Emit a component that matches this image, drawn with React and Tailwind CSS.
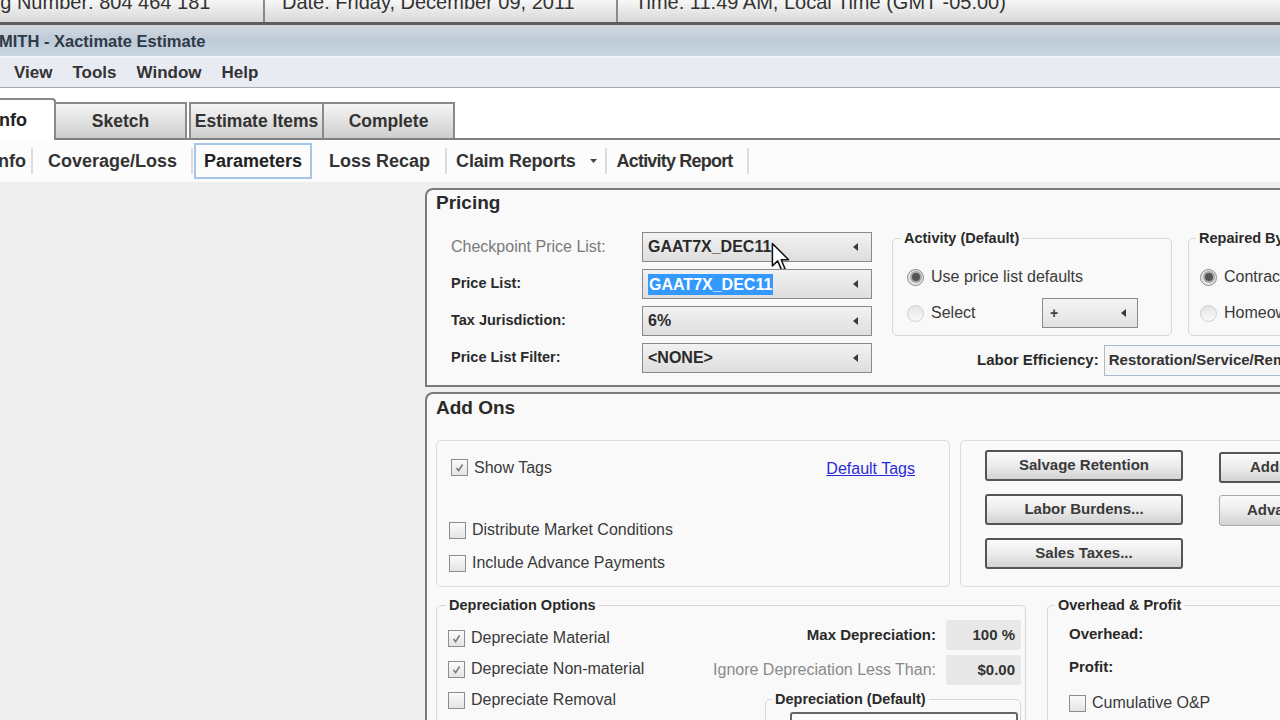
import React from 'react';

const Arrow = () => (
    <svg width="7" height="10" viewBox="0 0 7 10" className="shrink-0">
        <polygon points="6,1 6,9 1,5" fill="#3a3a3a" />
    </svg>
);

const Combo = ({ children, className = '', highlight = false }) => (
    <div className={`relative flex items-center justify-between h-[30px] border border-[#8a8a8a] bg-linear-to-b from-[#f2f2f2] to-[#dedede] pl-[5px] pr-[12px] ${className}`}>
        {highlight ? (
            <span className="bg-[#3399ff] text-white text-[16px] font-bold leading-[21px] px-[1px]">{children}</span>
        ) : (
            <span className="text-[16px] font-bold text-[#2a2a2a] whitespace-nowrap">{children}</span>
        )}
        <Arrow />
    </div>
);

const Radio = ({ checked }) =>
    checked ? (
        <span className="w-[17px] h-[17px] shrink-0 rounded-full border border-[#8a8a8a] bg-[#e6e6e6] flex items-center justify-center">
            <span className="w-[8px] h-[8px] rounded-full bg-[#555] ring-2 ring-[#a8a8a8]" />
        </span>
    ) : (
        <span className="w-[17px] h-[17px] shrink-0 rounded-full border border-[#cfcfcf] bg-linear-to-b from-[#e4e4e4] to-[#fafafa]" />
    );

const Check = ({ checked }) => (
    <span className="w-[17px] h-[17px] shrink-0 border border-[#8d8d8d] bg-linear-to-b from-[#fbfbfb] to-[#e4e4e4] flex items-center justify-center">
        {checked && (
            <svg width="11" height="11" viewBox="0 0 11 11">
                <path d="M2.5 6 L4.6 8.6 L8.6 2.5" stroke="#7a7a7a" strokeWidth="1.6" fill="none" />
            </svg>
        )}
    </span>
);

const CheckRow = ({ checked, children, className = '' }) => (
    <div className={`flex items-center h-[24px] ${className}`}>
        <Check checked={checked} />
        <span className="ml-[6px] text-[16px] text-[#3a3a3a] whitespace-nowrap">{children}</span>
    </div>
);

const Btn = ({ children, light = false, className = '' }) => (
    <div
        className={`h-[31px] shrink-0 rounded-[3px] flex items-center justify-center bg-linear-to-b from-[#fbfbfb] via-[#ececec] to-[#d2d2d2] text-[15px] font-bold text-[#3a3a3a] whitespace-nowrap ${light ? 'border border-[#a9a9a9]' : 'border-2 border-[#555]'} ${className}`}
    >
        {children}
    </div>
);

const Group = ({ title, className = '', legendClass = 'ml-[8px]', children }) => (
    <fieldset className={`border border-[#d7d7d7] rounded-[5px] shrink-0 ${className}`}>
        <legend className={`px-[3px] text-[14.5px] font-bold leading-[18px] text-[#2a2a2a] whitespace-nowrap ${legendClass}`}>{title}</legend>
        {children}
    </fieldset>
);

const Sep = () => <div className="w-[2px] h-[26px] bg-[#dcdcdc] shrink-0" />;

export default function App() {
    return (
        <div className="w-[1280px] h-[720px] overflow-hidden bg-[#efefef] flex flex-col font-['Liberation_Sans',Arial,sans-serif] text-[#333]">
            {/* status strip */}
            <div className="h-[25px] shrink-0 flex bg-linear-to-b from-[#f7f7f7] to-[#d8d8d8] border-b-[3px] border-[#5c5c5c] overflow-hidden">
                <div className="w-[265px] shrink-0 border-r-2 border-[#8a8a8a] overflow-hidden">
                    <div className="-mt-[8px] -ml-[22px] text-[20px] leading-[20px] whitespace-nowrap">Log Number: 804 464 181</div>
                </div>
                <div className="w-[353px] shrink-0 border-r-2 border-[#8a8a8a] overflow-hidden pl-[17px]">
                    <div className="-mt-[8px] text-[20px] leading-[20px] whitespace-nowrap">Date: Friday, December 09, 2011</div>
                </div>
                <div className="flex-1 overflow-hidden pl-[17px]">
                    <div className="-mt-[8px] text-[20px] leading-[20px] whitespace-nowrap">Time: 11:49 AM, Local Time (GMT -05:00)</div>
                </div>
            </div>

            {/* window title */}
            <div className="h-[33px] shrink-0 pt-[2px] bg-linear-to-b from-[#d5d9de] via-[#bdcad8] to-[#cbd7e2] border-b-2 border-[#eef8fa] overflow-hidden">
                <div className="-ml-[12px] text-[16.5px] font-bold leading-[29px] text-[#2f3a46] whitespace-nowrap">SMITH - Xactimate Estimate</div>
            </div>

            {/* menu */}
            <div className="h-[30px] shrink-0 flex gap-[20px] pl-[14px] bg-[#e9ebf2] border-b border-[#a9a9a9] text-[17px] font-bold leading-[29px] text-[#333]">
                <span>View</span>
                <span>Tools</span>
                <span>Window</span>
                <span>Help</span>
            </div>

            {/* main tabs */}
            <div className="h-[52px] shrink-0 flex items-end bg-white border-b-2 border-[#808080]">
                <div className="relative w-[56px] h-[42px] -mb-[2px] bg-white border-t-2 border-r-2 border-[#8a8a8a] rounded-tr-[4px] flex items-center shrink-0">
                    <span className="-ml-[6px] text-[18px] font-bold text-[#222]">Info</span>
                </div>
                <div className="w-[131px] h-[36px] border-t-2 border-r-2 border-[#8a8a8a] bg-linear-to-b from-[#f6f6f6] to-[#cdcdcd] flex items-center justify-center text-[17.5px] font-bold text-[#333] shrink-0">
                    Sketch
                </div>
                <div className="w-[135px] h-[36px] ml-[2px] border-t-2 border-x-2 border-[#8a8a8a] bg-linear-to-b from-[#f6f6f6] to-[#cdcdcd] flex items-center justify-center text-[17.5px] font-bold text-[#333] whitespace-nowrap shrink-0">
                    Estimate Items
                </div>
                <div className="w-[131px] h-[36px] border-t-2 border-r-2 border-[#8a8a8a] bg-linear-to-b from-[#f6f6f6] to-[#cdcdcd] flex items-center justify-center text-[17.5px] font-bold text-[#333] shrink-0">
                    Complete
                </div>
            </div>

            {/* sub tabs */}
            <div className="h-[42px] shrink-0 flex items-center bg-[#fcfcfc] text-[18px] font-bold text-[#333] whitespace-nowrap">
                <span className="-ml-[7px]">Info</span>
                <div className="ml-[5px]"><Sep /></div>
                <span className="ml-[15px]">Coverage/Loss</span>
                <div className="ml-[14px]"><Sep /></div>
                <div className="ml-[1px] w-[118px] h-[36px] border-2 border-[#a4c6e8] flex items-center justify-center text-[#222]">Parameters</div>
                <span className="ml-[17px]">Loss Recap</span>
                <div className="ml-[15px]"><Sep /></div>
                <span className="ml-[9px] tracking-[-0.2px]">Claim Reports</span>
                <svg width="9" height="6" viewBox="0 0 9 6" className="ml-[13px]">
                    <polygon points="1,1 8,1 4.5,5" fill="#444" />
                </svg>
                <div className="ml-[7px]"><Sep /></div>
                <span className="ml-[10px] tracking-[-0.8px]">Activity Report</span>
                <div className="ml-[14px]"><Sep /></div>
            </div>

            {/* content */}
            <div className="flex-1 flex min-h-0">
                <div className="w-[425px] shrink-0" />
                <div className="w-[900px] shrink-0 pt-[6px] flex flex-col gap-[5px]">
                    {/* Pricing */}
                    <div className="h-[199px] shrink-0 border-2 border-r-0 border-[#7a7a7a] rounded-tl-[8px] bg-[#f9f9f9] overflow-hidden">
                        <div className="h-[26px] pl-[9px] text-[19px] font-bold leading-[26px] text-[#2a2a2a]">Pricing</div>
                        <div className="flex items-start pl-[24px]">
                            <div className="mt-[16px] flex flex-col gap-[7px]">
                                <div className="flex items-center">
                                    <span className="w-[191px] text-[16px] text-[#7a7a7a]">Checkpoint Price List:</span>
                                    <div className="relative">
                                        <Combo className="w-[230px]">GAAT7X_DEC11</Combo>
                                        <svg width="21" height="31" viewBox="0 0 15 22" className="absolute left-[129px] top-[10px]">
                                            <path d="M1 1 L1 17 L4.8 13.4 L7.6 20 L10 19 L7.3 12.6 L12.6 12.6 Z" fill="#fff" stroke="#111" strokeWidth="1.1" strokeLinejoin="round" />
                                        </svg>
                                    </div>
                                </div>
                                <div className="flex items-center">
                                    <span className="w-[191px] text-[14.5px] font-bold text-[#2a2a2a]">Price List:</span>
                                    <Combo className="w-[230px]" highlight>GAAT7X_DEC11</Combo>
                                </div>
                                <div className="flex items-center">
                                    <span className="w-[191px] text-[14.5px] font-bold text-[#2a2a2a]">Tax Jurisdiction:</span>
                                    <Combo className="w-[230px]">6%</Combo>
                                </div>
                                <div className="flex items-center">
                                    <span className="w-[191px] text-[14.5px] font-bold text-[#2a2a2a]">Price List Filter:</span>
                                    <Combo className="w-[230px]">&lt;NONE&gt;</Combo>
                                </div>
                            </div>

                            <div className="ml-[20px] mt-[13px] flex flex-col">
                                <div className="flex">
                                    <Group title="Activity (Default)" className="w-[280px] h-[107px]">
                                        <div className="pl-[14px] mt-[15px] flex flex-col gap-[6px]">
                                            <div className="flex items-center h-[30px]">
                                                <Radio checked />
                                                <span className="ml-[7px] text-[16px] text-[#3a3a3a]">Use price list defaults</span>
                                            </div>
                                            <div className="flex items-center h-[30px]">
                                                <Radio />
                                                <span className="ml-[7px] w-[111px] text-[16px] text-[#3a3a3a]">Select</span>
                                                <div className="w-[96px] h-[30px] border border-[#8a8a8a] bg-linear-to-b from-[#f4f4f4] to-[#e2e2e2] flex items-center justify-between pl-[7px] pr-[10px]">
                                                    <span className="text-[14px] font-bold text-[#444]">+</span>
                                                    <Arrow />
                                                </div>
                                            </div>
                                        </div>
                                    </Group>
                                    <Group title="Repaired By" className="ml-[16px] w-[220px] h-[107px]" legendClass="ml-[7px]">
                                        <div className="pl-[11px] mt-[15px] flex flex-col gap-[6px]">
                                            <div className="flex items-center h-[30px]">
                                                <Radio checked />
                                                <span className="ml-[7px] text-[16px] text-[#3a3a3a]">Contractor</span>
                                            </div>
                                            <div className="flex items-center h-[30px]">
                                                <Radio />
                                                <span className="ml-[7px] text-[16px] text-[#3a3a3a]">Homeowner</span>
                                            </div>
                                        </div>
                                    </Group>
                                </div>
                                <div className="mt-[9px] pl-[85px] flex items-center">
                                    <span className="text-[15px] font-bold text-[#2a2a2a] whitespace-nowrap">Labor Efficiency:</span>
                                    <div className="ml-[5px] w-[300px] h-[31px] border border-[#a9b9c9] bg-[#f6f6f6] flex items-center pl-[4px]">
                                        <span className="text-[15px] font-bold text-[#333] whitespace-nowrap">Restoration/Service/Remodel</span>
                                    </div>
                                </div>
                            </div>
                        </div>
                    </div>

                    {/* Add Ons */}
                    <div className="flex-1 border-2 border-r-0 border-b-0 border-[#7a7a7a] rounded-tl-[8px] bg-[#f9f9f9] overflow-hidden">
                        <div className="h-[28px] pl-[9px] text-[19px] font-bold leading-[28px] text-[#2a2a2a]">Add Ons</div>
                        <div className="pl-[9px]">
                            <div className="mt-[18px] flex">
                                <div className="w-[514px] h-[147px] shrink-0 border border-[#dcdcdc] rounded-[5px] pt-[13px]">
                                    <div className="flex items-center justify-between pl-[14px] pr-[34px]">
                                        <CheckRow checked>Show Tags</CheckRow>
                                        <span className="mt-[3px] text-[16px] text-[#2b2bd6] underline">Default Tags</span>
                                    </div>
                                    <CheckRow className="mt-[37px] pl-[12px]">Distribute Market Conditions</CheckRow>
                                    <CheckRow className="mt-[9px] pl-[12px]">Include Advance Payments</CheckRow>
                                </div>
                                <div className="ml-[10px] w-[500px] h-[147px] shrink-0 border border-[#dcdcdc] rounded-[5px] flex">
                                    <div className="pl-[24px] pt-[9px] flex flex-col gap-[13px]">
                                        <Btn className="w-[198px]">Salvage Retention</Btn>
                                        <Btn className="w-[198px]">Labor Burdens...</Btn>
                                        <Btn className="w-[198px]">Sales Taxes...</Btn>
                                    </div>
                                    <div className="ml-[36px] pt-[11px] flex flex-col gap-[12px]">
                                        <Btn className="w-[212px]">Additional Charges...</Btn>
                                        <Btn light className="w-[206px]">Advance Payments...</Btn>
                                    </div>
                                </div>
                            </div>

                            <div className="mt-[9px] flex items-start">
                                <Group title="Depreciation Options" className="w-[590px] h-[200px]" legendClass="ml-[9px]">
                                    <div className="flex">
                                        <div className="w-[260px] pl-[11px] pt-[12px] flex flex-col gap-[7px]">
                                            <CheckRow checked>Depreciate Material</CheckRow>
                                            <CheckRow checked>Depreciate Non-material</CheckRow>
                                            <CheckRow>Depreciate Removal</CheckRow>
                                            <CheckRow>Depreciate Overhead &amp; Profit</CheckRow>
                                        </div>
                                        <div className="w-[324px] flex flex-col">
                                            <div className="mt-[6px] flex items-center justify-end gap-[10px]">
                                                <span className="shrink-0 text-[15px] font-bold text-[#2a2a2a]">Max Depreciation:</span>
                                                <div className="w-[75px] h-[30px] shrink-0 bg-[#e8e8e8] rounded-[3px] flex items-center justify-end pr-[6px] text-[15px] font-bold text-[#333]">100 %</div>
                                            </div>
                                            <div className="mt-[5px] flex items-center justify-end gap-[10px]">
                                                <span className="shrink-0 text-[16px] text-[#8a8a8a] whitespace-nowrap">Ignore Depreciation Less Than:</span>
                                                <div className="w-[75px] h-[30px] shrink-0 bg-[#e8e8e8] rounded-[3px] flex items-center justify-end pr-[6px] text-[15px] font-bold text-[#333]">$0.00</div>
                                            </div>
                                            <Group title="Depreciation (Default)" className="mt-[5px] ml-[68px] w-[256px] h-[90px]" legendClass="ml-[6px]">
                                                <div className="ml-[24px] mt-[4px] w-[228px] h-[30px] border-2 border-[#666] rounded-[3px] bg-[#fbfbfb]" />
                                            </Group>
                                        </div>
                                    </div>
                                </Group>
                                <Group title="Overhead & Profit" className="ml-[21px] w-[260px] h-[200px]" legendClass="ml-[7px]">
                                    <div className="pl-[21px]">
                                        <div className="mt-[8px] h-[24px] flex items-center text-[15px] font-bold text-[#2a2a2a]">Overhead:</div>
                                        <div className="mt-[9px] h-[24px] flex items-center text-[15px] font-bold text-[#2a2a2a]">Profit:</div>
                                        <CheckRow className="mt-[12px]">Cumulative O&amp;P</CheckRow>
                                    </div>
                                </Group>
                            </div>
                        </div>
                    </div>
                </div>
            </div>
        </div>
    );
}
